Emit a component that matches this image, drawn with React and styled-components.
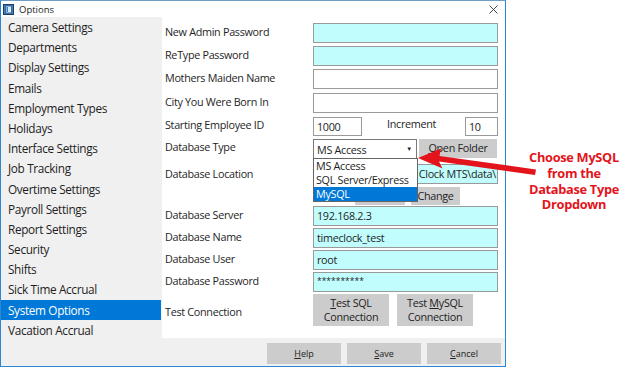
import React from 'react';
import styled, { createGlobalStyle } from 'styled-components';

const GlobalStyle = createGlobalStyle`
    html, body {
        margin: 0;
        padding: 0;
        background: #ffffff;
    }
    body {
        font-family: 'Open Sans', 'Noto Sans', sans-serif;
        color: #1e1e1e;
    }
`

const Page = styled.div`
    position: relative;
    width: 640px;
    height: 367px;
    overflow: hidden;
    background: #ffffff;
`

const Window = styled.div`
    width: 506px;
    height: 367px;
    box-sizing: border-box;
    border: 1px solid #2c86d6;
    border-top-color: #6f9fc9;
    display: flex;
    flex-direction: column;
    background: #f0f0f0;
`

const TitleBar = styled.div`
    height: 16px;
    background: #ffffff;
    display: flex;
    align-items: center;
    padding-left: 2px;
    gap: 5px;
    font-size: 9.5px;
    color: #222;
`

const TitleText = styled.span`
    flex: 1;
`

const CloseButton = styled.div`
    width: 24px;
    display: flex;
    justify-content: center;
    align-items: center;
    padding-top: 1px;
`

const Body = styled.div`
    flex: 1;
    display: flex;
`

const Sidebar = styled.ul`
    list-style: none;
    margin: 0;
    padding: 0;
    width: 160px;
    background: #f0f0f0;
`

const SideItem = styled.li`
    height: 20.2px;
    line-height: 21px;
    padding-left: 7px;
    font-size: 11.8px;
    letter-spacing: -0.35px;
    white-space: nowrap;
    ${props => props.selected ? 'background: #0078d7; color: #ffffff;' : 'color: #1e1e1e;'}
`

const Main = styled.div`
    flex: 1;
    display: flex;
    flex-direction: column;
    padding-left: 1px;
`

const Content = styled.div`
    position: relative;
    height: 321px;
    background: #ffffff;
    padding: 6px 0 0 3px;
    box-sizing: border-box;
`

const Row = styled.div`
    display: flex;
    align-items: flex-start;
    height: ${props => props.h}px;
`

const Label = styled.div`
    width: 148px;
    flex: none;
    font-size: 10.8px;
    letter-spacing: -0.3px;
    white-space: nowrap;
    margin-top: ${props => props.top || 0}px;
`

const Field = styled.div`
    box-sizing: border-box;
    width: ${props => props.w || 185}px;
    height: ${props => props.h || 20}px;
    border: 1px solid #9a9a9a;
    background: ${props => props.cyan ? '#c1fdfd' : '#ffffff'};
    font-size: 10.8px;
    line-height: 18px;
    padding-left: 3px;
    white-space: nowrap;
    overflow: hidden;
    letter-spacing: -0.3px;
`

const Stars = styled(Field)`
    font-size: 8.5px;
    letter-spacing: 0;
    line-height: 16px;
`

const Increment = styled.div`
    width: 103px;
    font-size: 10.8px;
    letter-spacing: -0.3px;
    padding-left: 25px;
    box-sizing: border-box;
    margin-top: -1px;
`

const Select = styled.div`
    box-sizing: border-box;
    width: 104px;
    height: 20px;
    border: 1px solid #7a7a7a;
    background: #ffffff;
    display: flex;
    align-items: center;
    font-size: 10.8px;
    letter-spacing: -0.3px;
    padding-left: 3px;
`

const SelectText = styled.span`
    flex: 1;
`

const SelectArrow = styled.div`
    width: 14px;
    height: 100%;
    display: flex;
    align-items: center;
    justify-content: center;
    font-size: 6px;
    color: #222;
`

const Button = styled.div`
    box-sizing: border-box;
    width: ${props => props.w}px;
    height: ${props => props.h || 19}px;
    margin-left: ${props => props.ml || 0}px;
    background: #cccccc;
    display: flex;
    align-items: center;
    justify-content: center;
    text-align: center;
    font-size: 10.8px;
    line-height: 14.5px;
    letter-spacing: -0.3px;
    color: #222;
`

const LocationBlock = styled.div`
    display: flex;
    flex-direction: column;
    gap: 3px;
    padding-top: 1px;
`

const ButtonRow = styled.div`
    display: flex;
`

const Dropdown = styled.ul`
    position: absolute;
    left: 151px;
    top: 141px;
    width: 105px;
    margin: 0;
    padding: 0;
    list-style: none;
    background: #ffffff;
    border: 1px solid #646464;
    box-sizing: border-box;
`

const DropItem = styled.li`
    height: 14px;
    line-height: 14px;
    padding-left: 2px;
    font-size: 10.8px;
    letter-spacing: -0.3px;
    white-space: nowrap;
    ${props => props.selected ? 'background: #0078d7; color: #ffffff;' : ''}
`

const Footer = styled.div`
    flex: 1;
    display: flex;
    justify-content: flex-end;
    align-items: flex-start;
    gap: 6px;
    padding: 5px 4px 0 0;
`

const FooterButton = styled.div`
    width: 74px;
    height: 21px;
    background: #cccccc;
    display: flex;
    align-items: center;
    justify-content: center;
    font-size: 9px;
    color: #222;
`

const Callout = styled.div`
    position: absolute;
    left: 526px;
    top: 150px;
    width: 96px;
    text-align: center;
    color: #e3141c;
    font-family: 'Open Sans', 'Noto Sans', sans-serif;
    font-weight: 700;
    font-size: 12.8px;
    line-height: 15.8px;
    letter-spacing: -0.3px;
`

const Arrow = styled.svg`
    position: absolute;
    left: 414px;
    top: 145px;
`

const WindowIcon = () => (
    <svg width="11" height="11" viewBox="0 0 11 11">
        <rect x="0.5" y="0.5" width="10" height="10" fill="#3a7fc2" stroke="#1d3d66" />
        <rect x="2.5" y="2" width="6" height="7" fill="#d9ecff" stroke="#2b5a8c" strokeWidth="0.8" />
        <rect x="3.5" y="3" width="1.5" height="5" fill="#3a7fc2" />
    </svg>
)

const CloseIcon = () => (
    <svg width="9" height="9" viewBox="0 0 9 9">
        <path d="M0.5 0.5 L8.5 8.5 M8.5 0.5 L0.5 8.5" stroke="#333" strokeWidth="0.9" />
    </svg>
)

const sections = [
    'Camera Settings', 'Departments', 'Display Settings', 'Emails', 'Employment Types',
    'Holidays', 'Interface Settings', 'Job Tracking', 'Overtime Settings', 'Payroll Settings',
    'Report Settings', 'Security', 'Shifts', 'Sick Time Accrual', 'System Options', 'Vacation Accrual'
]

const App = () => {
    return (
        <Page>
            <GlobalStyle />
            <Window>
                <TitleBar>
                    <WindowIcon />
                    <TitleText>Options</TitleText>
                    <CloseButton><CloseIcon /></CloseButton>
                </TitleBar>
                <Body>
                    <Sidebar>
                        {sections.map(s => (
                            <SideItem key={s} selected={s === 'System Options'}>{s}</SideItem>
                        ))}
                    </Sidebar>
                    <Main>
                        <Content>
                            <Row h={23}>
                                <Label top={1}>New Admin Password</Label>
                                <Field cyan />
                            </Row>
                            <Row h={23}>
                                <Label top={1}>ReType Password</Label>
                                <Field cyan />
                            </Row>
                            <Row h={24}>
                                <Label top={1}>Mothers Maiden Name</Label>
                                <Field />
                            </Row>
                            <Row h={24}>
                                <Label top={1}>City You Were Born In</Label>
                                <Field />
                            </Row>
                            <Row h={22}>
                                <Label top={0}>Starting Employee ID</Label>
                                <Field w={49} h={19}>1000</Field>
                                <Increment>Increment</Increment>
                                <Field w={33} h={19}>10</Field>
                            </Row>
                            <Row h={24}>
                                <Label top={0}>Database Type</Label>
                                <Select>
                                    <SelectText>MS Access</SelectText>
                                    <SelectArrow>▼</SelectArrow>
                                </Select>
                                <Button w={78} ml={2}><span><u>O</u>pen Folder</span></Button>
                            </Row>
                            <Row h={43}>
                                <Label top={3}>Database Location</Label>
                                <LocationBlock>
                                    <Field cyan>C:\Users\Public\Time Clock MTS\data\</Field>
                                    <ButtonRow>
                                        <Button w={50} h={18} ml={42}>Browse</Button>
                                        <Button w={49} h={18} ml={6}>Change</Button>
                                    </ButtonRow>
                                </LocationBlock>
                            </Row>
                            <Row h={22}>
                                <Label top={1}>Database Server</Label>
                                <Field cyan>192.168.2.3</Field>
                            </Row>
                            <Row h={22}>
                                <Label top={1}>Database Name</Label>
                                <Field cyan>timeclock_test</Field>
                            </Row>
                            <Row h={22}>
                                <Label top={1}>Database User</Label>
                                <Field cyan>root</Field>
                            </Row>
                            <Row h={22}>
                                <Label top={1}>Database Password</Label>
                                <Stars cyan>**********</Stars>
                            </Row>
                            <Row h={34}>
                                <Label top={10}>Test Connection</Label>
                                <Button w={76} h={32}><span><u>T</u>est SQL<br />Connection</span></Button>
                                <Button w={76} h={32} ml={8}><span>Test <u>M</u>ySQL<br />Connection</span></Button>
                            </Row>
                            <Dropdown>
                                <DropItem>MS Access</DropItem>
                                <DropItem>SQL Server/Express</DropItem>
                                <DropItem selected>MySQL</DropItem>
                            </Dropdown>
                        </Content>
                        <Footer>
                            <FooterButton><span><u>H</u>elp</span></FooterButton>
                            <FooterButton><span><u>S</u>ave</span></FooterButton>
                            <FooterButton><span><u>C</u>ancel</span></FooterButton>
                        </Footer>
                    </Main>
                </Body>
            </Window>
            <Arrow width="126" height="34" viewBox="0 0 126 34">
                <path d="M4 13 L27 3.5 L25.5 11 L122 24.5 L121 30 L25 16.5 L28.5 23.5 Z" fill="#e3141c" />
            </Arrow>
            <Callout>
                Choose MySQL<br />from the<br />Database Type<br />Dropdown
            </Callout>
        </Page>
    )
}

export default App;
